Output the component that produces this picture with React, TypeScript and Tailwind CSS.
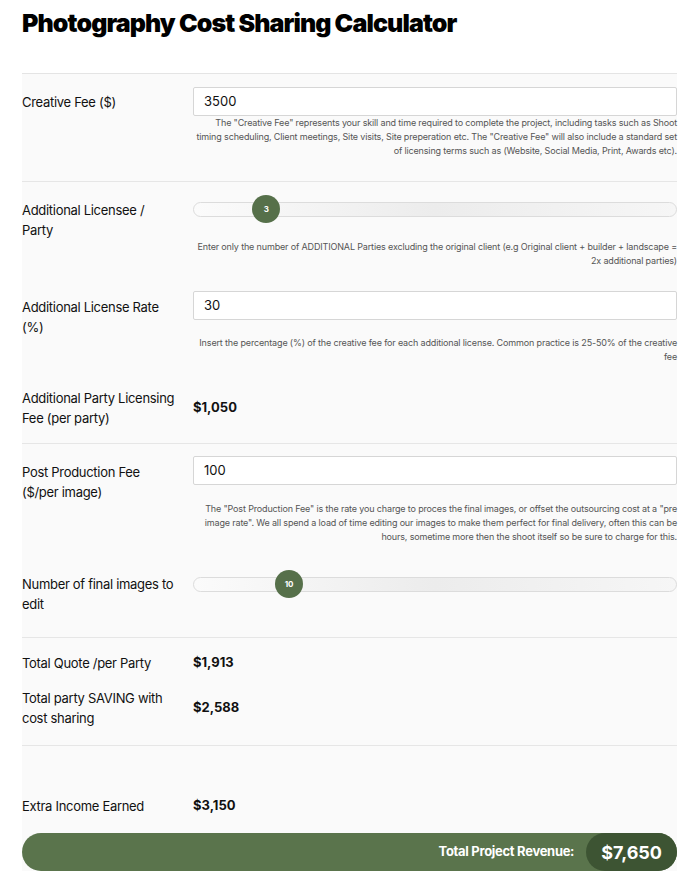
import React from 'react';

const FONT = { fontFamily: 'Inter, "Noto Sans", Arial, sans-serif' };

const Help: React.FC<{ lines: string[]; className?: string }> = ({ lines, className = '' }) => (
  <p className={`text-right text-[9px] leading-[14px] text-[#555] tracking-[-0.15px] whitespace-nowrap ${className}`}>
    {lines.map((l, i) => (
      <React.Fragment key={i}>
        {l}
        {i < lines.length - 1 && <br />}
      </React.Fragment>
    ))}
  </p>
);

const Input: React.FC<{ value: string }> = ({ value }) => (
  <div className="h-[29px] w-full bg-white border border-[#d6d6d6] rounded-[2px] flex items-center pl-[10px] text-[13px] text-[#111]">
    {value}
  </div>
);

// fraction = where the thumb sits along the track
const Slider: React.FC<{ value: number; fraction: number }> = ({ value, fraction }) => (
  <div className="relative h-[28px] flex items-center">
    <div className="w-full h-[15px] rounded-full border border-[#dcdcdc] bg-gradient-to-r from-[#fbfbfb] via-[#ececec] to-[#f6f6f6]" />
    <div
      className="absolute top-0 w-[28px] h-[28px] rounded-full bg-[#56704a] text-white text-[8px] font-bold flex items-center justify-center"
      style={{ left: `calc(${fraction * 100}% - ${fraction * 28}px)` }}
    >
      {value}
    </div>
  </div>
);

export default function App() {
  return (
    <div className="bg-white min-h-screen px-[22px] pt-[6px] text-[#111]" style={FONT}>
      <h1 className="text-[25px] leading-[34px] font-black tracking-[-0.9px] text-black">
        Photography Cost Sharing Calculator
      </h1>

      <div className="mt-[33px] bg-[#fafafa] border-t border-[#e4e4e4] w-[655px]">
        {/* Creative fee */}
        <div className="grid grid-cols-[171px_1fr] pt-[13px] pb-[23px] border-b border-[#e6e6e6]">
          <div className="pt-[5px] text-[13px] leading-5 tracking-[-0.3px]">Creative Fee ($)</div>
          <div>
            <Input value="3500" />
            <Help
              lines={[
                'The "Creative Fee" represents your skill and time required to complete the project, including tasks such as Shoot',
                'timing scheduling, Client meetings, Site visits, Site preperation etc. The "Creative Fee" will also include a standard set',
                'of licensing terms such as (Website, Social Media, Print, Awards etc).',
              ]}
            />
          </div>
        </div>

        {/* Additional licensee */}
        <div className="grid grid-cols-[171px_1fr] pt-[13px]">
          <div className="pt-[5px] text-[13px] leading-5 tracking-[-0.3px]">Additional Licensee /<br />Party</div>
          <div>
            <Slider value={3} fraction={0.13} />
            <Help
              className="mt-[17px]"
              lines={[
                'Enter only the number of ADDITIONAL Parties excluding the original client (e.g Original client + builder + landscape =',
                '2x additional parties)',
              ]}
            />
          </div>
        </div>

        {/* Additional license rate */}
        <div className="grid grid-cols-[171px_1fr] pt-[23px]">
          <div className="pt-[6px] text-[13px] leading-5 tracking-[-0.3px]">Additional License Rate<br />(%)</div>
          <div>
            <Input value="30" />
            <Help
              className="mt-[16px]"
              lines={[
                'Insert the percentage (%) of the creative fee for each additional license. Common practice is 25-50% of the creative',
                'fee',
              ]}
            />
          </div>
        </div>

        {/* Licensing fee per party */}
        <div className="grid grid-cols-[171px_1fr] items-center pt-[24px] pb-[15px] border-b border-[#e6e6e6]">
          <div className="text-[13px] leading-5 tracking-[-0.3px]">Additional Party Licensing<br />Fee (per party)</div>
          <div className="text-[13px] font-bold">$1,050</div>
        </div>

        {/* Post production fee */}
        <div className="grid grid-cols-[171px_1fr] pt-[12px]">
          <div className="pt-[6px] text-[13px] leading-5 tracking-[-0.3px]">Post Production Fee<br />($/per image)</div>
          <div>
            <Input value="100" />
            <Help
              className="mt-[17px]"
              lines={[
                'The "Post Production Fee" is the rate you charge to proces the final images, or offset the outsourcing cost at a "pre',
                'image rate". We all spend a load of time editing our images to make them perfect for final delivery, often this can be',
                'hours, sometime more then the shoot itself so be sure to charge for this.',
              ]}
            />
          </div>
        </div>

        {/* Number of images */}
        <div className="grid grid-cols-[171px_1fr] pt-[26px] pb-[23px] border-b border-[#e6e6e6]">
          <div className="pt-[4px] text-[13px] leading-5 tracking-[-0.3px]">Number of final images to<br />edit</div>
          <Slider value={10} fraction={0.18} />
        </div>

        {/* Totals */}
        <div className="pt-[15px] pb-[17px] border-b border-[#e6e6e6]">
          <div className="grid grid-cols-[171px_1fr] items-center">
            <div className="text-[13px] leading-5 tracking-[-0.3px]">Total Quote /per Party</div>
            <div className="text-[13px] font-bold">$1,913</div>
          </div>
          <div className="grid grid-cols-[171px_1fr] items-center mt-[15px]">
            <div className="text-[13px] leading-5 tracking-[-0.3px]">Total party SAVING with<br />cost sharing</div>
            <div className="text-[13px] font-bold">$2,588</div>
          </div>
        </div>

        {/* Extra income */}
        <div className="grid grid-cols-[171px_1fr] items-center pt-[50px] pb-[8px]">
          <div className="text-[13px] leading-5 tracking-[-0.3px]">Extra Income Earned</div>
          <div className="text-[13px] font-bold">$3,150</div>
        </div>

        {/* Revenue bar */}
        <div className="mt-[9px] h-[38px] rounded-full bg-[#5a744c] flex items-center justify-end">
          <span className="text-white text-[13px] font-bold tracking-[-0.3px] mr-[12px]">Total Project Revenue:</span>
          <span className="h-full px-[15px] rounded-full bg-[#3d5433] text-white text-[18px] font-bold flex items-center">
            $7,650
          </span>
        </div>
      </div>
    </div>
  );
}
